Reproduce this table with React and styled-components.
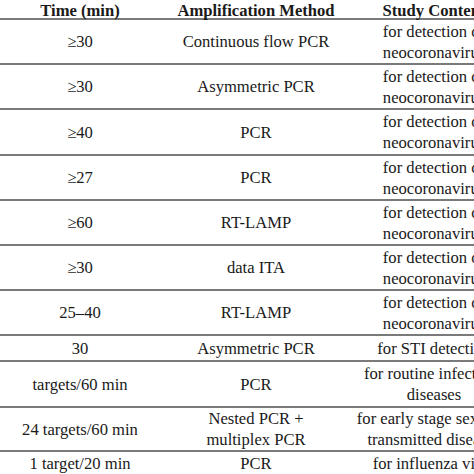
import React from "react";
import styled, { createGlobalStyle } from "styled-components";

const Global = createGlobalStyle`
  html, body { margin: 0; padding: 0; background: #fff; }
  body { font-family: "Liberation Serif", "Times New Roman", serif; color: #1a1a1a; }
`;

const Sheet = styled.div`
  width: 474px;
  height: 474px;
  overflow: hidden;
  background: #fff;
`;

const Table = styled.div`
  width: 516px;
  display: flex;
  flex-direction: column;
`;

const Row = styled.div`
  display: grid;
  grid-template-columns: 160px 192px 164px;
  height: ${(p) => p.$h}px;
  box-sizing: border-box;
  border-bottom: ${(p) => (p.$last ? "none" : "2px solid #7a7a7a")};
`;

const Cell = styled.div`
  display: flex;
  align-items: center;
  justify-content: center;
  text-align: center;
  font-size: 16.6px;
  line-height: 21px;
  font-weight: ${(p) => (p.$head ? 700 : 400)};
  white-space: nowrap;
`;

const rows = [
  { h: 45, t: "≥30", m: ["Continuous flow PCR"], s: ["for detection of", "neocoronavirus"] },
  { h: 45, t: "≥30", m: ["Asymmetric PCR"], s: ["for detection of", "neocoronavirus"] },
  { h: 46, t: "≥40", m: ["PCR"], s: ["for detection of", "neocoronavirus"] },
  { h: 45, t: "≥27", m: ["PCR"], s: ["for detection of", "neocoronavirus"] },
  { h: 45, t: "≥60", m: ["RT-LAMP"], s: ["for detection of", "neocoronavirus"] },
  { h: 45, t: "≥30", m: ["data ITA"], s: ["for detection of", "neocoronavirus"] },
  { h: 45, t: "25–40", m: ["RT-LAMP"], s: ["for detection of", "neocoronavirus"] },
  { h: 26, t: "30", m: ["Asymmetric PCR"], s: ["for STI detection"] },
  { h: 46, t: "targets/60 min", m: ["PCR"], s: ["for routine infectious", "diseases"] },
  { h: 44, t: "24 targets/60 min", m: ["Nested PCR +", "multiplex PCR"], s: ["for early stage sexually", "transmitted diseases"] },
  { h: 23, t: "1 target/20 min", m: ["PCR"], s: ["for influenza virus"], last: true },
];

const Lines = ({ items }) =>
  items.map((line, i) => (
    <React.Fragment key={i}>
      {i > 0 && <br />}
      {line}
    </React.Fragment>
  ));

export default function App() {
  return (
    <Sheet>
      <Global />
      <Table>
        <Row $h={20}>
          <Cell $head>Time (min)</Cell>
          <Cell $head>Amplification Method</Cell>
          <Cell $head>Study Content</Cell>
        </Row>
        {rows.map((r, i) => (
          <Row key={i} $h={r.h} $last={r.last}>
            <Cell>{r.t}</Cell>
            <Cell>
              <span><Lines items={r.m} /></span>
            </Cell>
            <Cell>
              <span><Lines items={r.s} /></span>
            </Cell>
          </Row>
        ))}
      </Table>
    </Sheet>
  );
}
